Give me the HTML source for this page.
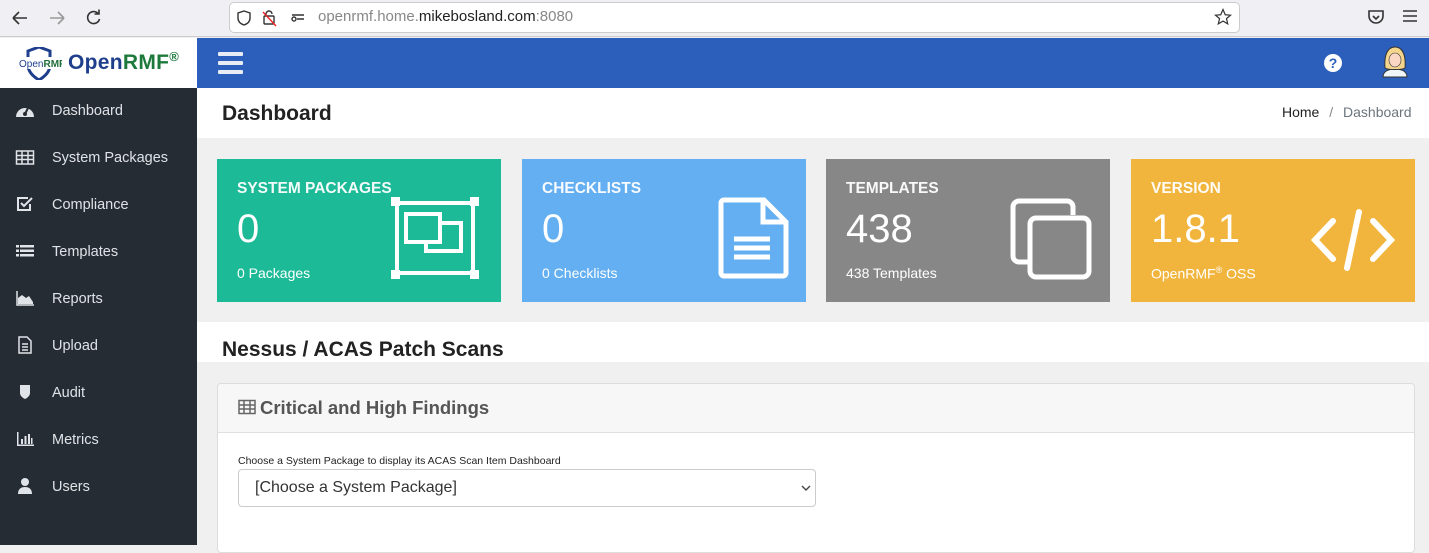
<!DOCTYPE html>
<html><head><meta charset="utf-8"><style>
*{box-sizing:border-box;margin:0;padding:0}
body{width:1429px;height:545px;overflow:hidden;font-family:"Liberation Sans",sans-serif;background:#f0f0f0;position:relative}
.abs{position:absolute}
.chrome{left:0;top:0;width:1429px;height:37px;background:#f0f0f4;border-bottom:1px solid #ccc}
.url{left:229px;top:2px;width:1011px;height:31px;background:#fff;border:1px solid #ccc;border-radius:5px}
.side{left:0;top:88px;width:197px;height:457px;background:#262c33}
.logo{left:0;top:38px;width:197px;height:50px;background:#fff}
.nav{left:197px;top:38px;width:1232px;height:50px;background:#2c5fbb}
.item{position:absolute;left:52px;color:#dfe3e8;font-size:14.5px}
.ico{position:absolute;left:15px;width:20px;height:20px}
.box{top:159px;height:143px;color:#fff}
.box .t{position:absolute;left:20px;top:21px;font-size:15.5px;font-weight:bold;opacity:.95}
.box .n{position:absolute;left:20px;top:48px;font-size:40px}
.box .s{position:absolute;left:20px;top:106px;font-size:14px}
</style></head><body>
<div class="abs chrome"></div>
<svg class="abs" style="left:0;top:0" width="110" height="37" viewBox="0 0 110 37" fill="none" stroke="#333" stroke-width="1.6"><path d="M13 18h14M13 18l6-6M13 18l6 6"/><path d="M50 18h14M64 18l-6-6M64 18l-6 6" stroke="#999"/><path d="M98.5 14a6 6 0 1 0 1 5M99 9.5v4.5h-4.5"/></svg>
<div class="abs url"></div>
<svg class="abs" style="left:236px;top:9px" width="70" height="18" viewBox="0 0 70 18" fill="none" stroke="#333" stroke-width="1.4"><path d="M8 2l6 2v5c0 4-3 6-6 7-3-1-6-3-6-7V4z"/><rect x="28" y="7" width="10" height="8" rx="1"/><path d="M30 7V5a3 3 0 0 1 6 0" /><path d="M27 3l13 14" stroke="#e22"/><circle cx="58" cy="10" r="2"/><path d="M61 10h7M56 6h12"/></svg>
<div class="abs" style="left:318px;top:8px;font-size:15px;color:#888">openrmf.home.<span style="color:#222">mikebosland.com</span>:8080</div>
<svg class="abs" style="left:1214px;top:8px" width="18" height="18" viewBox="0 0 24 24" fill="none" stroke="#333" stroke-width="1.6"><path d="M12 2l3 7 7 .6-5.4 4.6 1.7 7L12 17.5 5.7 21.2l1.7-7L2 9.6 9 9z"/></svg>
<svg class="abs" style="left:1367px;top:9px" width="18" height="16" viewBox="0 0 18 16" fill="none" stroke="#333" stroke-width="1.6"><path d="M2 2h14v5a7 7 0 0 1-14 0z"/><path d="M6 7l3 3 3-3"/></svg>
<svg class="abs" style="left:1403px;top:10px" width="14" height="12" stroke="#333" stroke-width="1.6"><path d="M0 1h14M0 6h14M0 11h14"/></svg>
<div class="abs logo"></div>
<svg class="abs" style="left:16px;top:47px" width="46" height="33" viewBox="0 0 46 33"><path d="M12 4l11-4 11 4v14c0 7-6 12-11 15-5-3-11-8-11-15z" fill="none" stroke="#1f3e8c" stroke-width="3"/><rect x="2" y="10" width="42" height="12" fill="#fff"/><text x="3" y="20" font-size="10" font-family="Liberation Sans" fill="#1f3e8c">Open<tspan fill="#1f6e3a" font-weight="bold">RMF</tspan></text></svg>
<div class="abs" style="left:68px;top:49px;font-size:21px;font-weight:bold;color:#1f3e8c;letter-spacing:.3px">Open<span style="color:#1e7a3c">RMF</span><sup style="font-size:13px;color:#1e7a3c">®</sup></div>
<div class="abs nav"></div>
<svg class="abs" style="left:218px;top:52px" width="25" height="22"><rect y="0" width="25" height="4" rx="1" fill="#e8ecf4"/><rect y="9" width="25" height="4" rx="1" fill="#e8ecf4"/><rect y="18" width="25" height="4" rx="1" fill="#e8ecf4"/></svg>
<div class="abs" style="left:1324px;top:54px;width:18px;height:18px;border-radius:50%;background:#fff;color:#2c5fbb;font-size:14px;font-weight:bold;text-align:center;line-height:18px">?</div>
<svg class="abs" style="left:1380px;top:44px" width="30" height="34" viewBox="0 0 30 34"><path d="M3 33c0-6 6-8 12-8s12 2 12 8z" fill="#eef6fa" stroke="#333"/><path d="M5 24C4 12 7 3 15 3s11 9 10 21c-3 2-17 2-20 0z" fill="#f4d58d" stroke="#333"/><ellipse cx="15" cy="16" rx="6" ry="7" fill="#f9d7c4" stroke="#333" stroke-width=".6"/></svg>
<div class="abs side"></div>
<svg class="ico" style="top:101px" viewBox="0 0 20 20"><path d="M1 16a9 9 0 0 1 18 0z" fill="#e0e4e8"/><circle cx="10" cy="13" r="2" fill="#262c33"/><path d="M10 13l3-6" stroke="#262c33" stroke-width="2"/></svg>
<div class="item" style="top:103px">Dashboard</div>
<svg class="ico" style="top:148px" viewBox="0 0 20 20" fill="none" stroke="#e0e4e8" stroke-width="1.5"><rect x="1.5" y="3" width="17" height="13"/><path d="M1.5 7.5h17M1.5 11.5h17M7 3v13M13 3v13"/></svg>
<div class="item" style="top:150px">System Packages</div>
<svg class="ico" style="top:194px" viewBox="0 0 20 20" fill="none" stroke="#e0e4e8" stroke-width="2"><path d="M15 10v6H3V4h10"/><path d="M6 9l3 3 8-8"/></svg>
<div class="item" style="top:197px">Compliance</div>
<svg class="ico" style="top:241px" viewBox="0 0 20 20" fill="#e0e4e8"><rect x="1" y="4" width="3" height="2.5"/><rect x="5" y="4" width="14" height="2.5"/><rect x="1" y="8.5" width="3" height="2.5"/><rect x="5" y="8.5" width="14" height="2.5"/><rect x="1" y="13" width="3" height="2.5"/><rect x="5" y="13" width="14" height="2.5"/></svg>
<div class="item" style="top:244px">Templates</div>
<svg class="ico" style="top:288px" viewBox="0 0 20 20"><path d="M2 3v14h17" fill="none" stroke="#e0e4e8" stroke-width="1.5"/><path d="M3 16V10l4-3 4 3 3-2 4 6v2z" fill="#e0e4e8"/></svg>
<div class="item" style="top:291px">Reports</div>
<svg class="ico" style="top:335px" viewBox="0 0 20 20" fill="none" stroke="#e0e4e8" stroke-width="1.5"><path d="M4 2h8l4 4v12H4z"/><path d="M7 9h6M7 12h6M7 15h6"/></svg>
<div class="item" style="top:338px">Upload</div>
<svg class="ico" style="top:382px" viewBox="0 0 20 20"><path d="M5 3h10v8c0 3-3 5-5 6-2-1-5-3-5-6z" fill="#e0e4e8"/></svg>
<div class="item" style="top:385px">Audit</div>
<svg class="ico" style="top:429px" viewBox="0 0 20 20" fill="#e0e4e8"><path d="M2 3v14h17v-1.5H3.5V3z"/><rect x="6" y="10" width="2" height="5"/><rect x="9.5" y="7" width="2" height="8"/><rect x="13" y="5" width="2" height="10"/><rect x="16" y="9" width="1.5" height="6"/></svg>
<div class="item" style="top:432px">Metrics</div>
<svg class="ico" style="top:476px" viewBox="0 0 20 20" fill="#e0e4e8"><circle cx="10" cy="6" r="4"/><path d="M3 18c0-5 3-7 7-7s7 2 7 7z"/></svg>
<div class="item" style="top:479px">Users</div>
<div class="abs" style="left:197px;top:88px;width:1232px;height:50px;background:#fff"></div>
<div class="abs" style="left:222px;top:102px;font-size:21px;font-weight:bold;color:#222">Dashboard</div>
<div class="abs" style="left:1282px;top:104px;font-size:14px;color:#222">Home <span style="color:#888;margin:0 6px">/</span> <span style="color:#6c757d">Dashboard</span></div>
<div class="abs box" style="left:217px;width:284px;background:#1dba98">
<div class="t">SYSTEM PACKAGES</div><div class="n">0</div><div class="s">0 Packages</div>
<svg class="abs" style="left:172px;top:38px" width="92" height="82" viewBox="0 0 92 82" fill="none" stroke="#fff" stroke-width="4"><path d="M10 6h72M10 76h72M8 8v66M84 8v66"/><rect x="2" y="0" width="9" height="9" fill="#fff" stroke="none"/><rect x="81" y="0" width="9" height="9" fill="#fff" stroke="none"/><rect x="2" y="73" width="9" height="9" fill="#fff" stroke="none"/><rect x="81" y="73" width="9" height="9" fill="#fff" stroke="none"/><rect x="17" y="17" width="34" height="28"/><path d="M51 26h21v28H37V45"/></svg>
</div>
<div class="abs box" style="left:522px;width:284px;background:#63aff1">
<div class="t">CHECKLISTS</div><div class="n">0</div><div class="s">0 Checklists</div>
<svg class="abs" style="left:195px;top:38px" width="72" height="82" viewBox="0 0 72 82" fill="none" stroke="#fff" stroke-width="5"><path d="M4 6a3 3 0 0 1 3-3h40l22 22v51a3 3 0 0 1-3 3H7a3 3 0 0 1-3-3z"/><path d="M46 3v22h23" /><path d="M17 42h36M17 51h36M17 60h36" stroke-width="5"/></svg>
</div>
<div class="abs box" style="left:826px;width:284px;background:#878787">
<div class="t">TEMPLATES</div><div class="n">438</div><div class="s">438 Templates</div>
<svg class="abs" style="left:183px;top:38px" width="84" height="84" viewBox="0 0 84 84" fill="none" stroke="#fff" stroke-width="5"><path d="M19 65H10a6 6 0 0 1-6-6V10a6 6 0 0 1 6-6h48a6 6 0 0 1 6 6v8"/><rect x="21" y="21" width="59" height="59" rx="6"/></svg>
</div>
<div class="abs box" style="left:1131px;width:284px;background:#f1b53d">
<div class="t">VERSION</div><div class="n">1.8.1</div><div class="s">OpenRMF<sup style="font-size:9px">®</sup> OSS</div>
<svg class="abs" style="left:180px;top:50px" width="84" height="62" viewBox="0 0 84 62" fill="none" stroke="#fff" stroke-width="6" stroke-linecap="round"><path d="M22 12L4 31l18 19M62 12l18 19-18 19M48 3L36 59"/></svg>
</div>
<div class="abs" style="left:197px;top:322px;width:1232px;height:40px;background:#fff"></div>
<div class="abs" style="left:222px;top:338px;font-size:21px;font-weight:bold;color:#222">Nessus / ACAS Patch Scans</div>
<div class="abs" style="left:217px;top:383px;width:1198px;height:170px;background:#fff;border:1px solid #ddd;border-radius:4px;overflow:hidden">
<div style="height:49px;background:#f7f7f7;border-bottom:1px solid #e0e0e0"></div>
</div>
<svg class="abs" style="left:238px;top:399px" width="18" height="16" viewBox="0 0 18 16" fill="none" stroke="#666" stroke-width="1.5"><rect x="1" y="1.5" width="16" height="13"/><path d="M1 6h16M1 10h16M6 1.5v13M12 1.5v13"/></svg>
<div class="abs" style="left:260px;top:397px;font-size:18.5px;color:#555;font-weight:bold">Critical and High Findings</div>
<div class="abs" style="left:238px;top:455px;font-size:10.5px;color:#222">Choose a System Package to display its ACAS Scan Item Dashboard</div>
<div class="abs" style="left:238px;top:469px;width:578px;height:38px;border:1px solid #ccc;border-radius:4px;background:#fff"></div>
<div class="abs" style="left:255px;top:479px;font-size:16px;color:#333">[Choose a System Package]</div>
<svg class="abs" style="left:801px;top:485px" width="10" height="7"><path d="M1 1l4 4 4-4" fill="none" stroke="#444" stroke-width="1.4"/></svg>
</body></html>
